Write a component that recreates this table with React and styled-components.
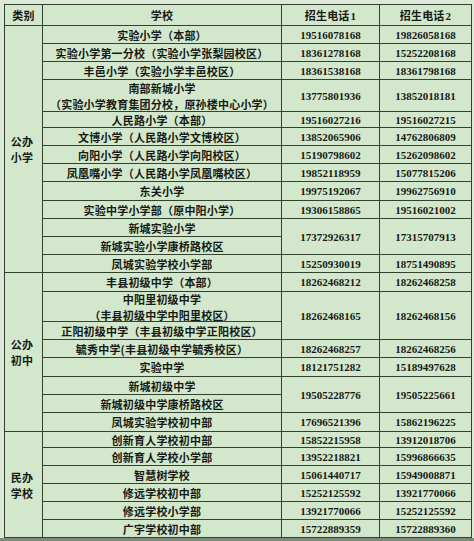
import React from "react";
import styled, { createGlobalStyle } from "styled-components";

const Global = createGlobalStyle`
  html, body { margin: 0; padding: 0; background: #dde9d8; }
  body { width: 474px; height: 541px; overflow: hidden; }
`;

const Page = styled.div`
  padding: 4px 0 0 4px;
  display: flex;
  flex-direction: column;
`;

const Grid = styled.div`
  width: 466px;
  display: grid;
  grid-template-columns: 37px 238px 97px 91px;
  grid-template-rows: ${(p) => p.$rows.map((r) => `${r}px`).join(" ")};
  gap: 1px;
  background: #33412f;
  border: 1px solid #33412f;
`;

const Cell = styled.div`
  grid-column: ${(p) => p.$col};
  grid-row: ${(p) => p.$row} / span ${(p) => p.$span || 1};
  background: #d3e7cc;
  display: flex;
  flex-direction: column;
  align-items: center;
  justify-content: center;
  text-align: center;
  color: #161a15;
  font-weight: 700;
  white-space: nowrap;
  overflow: hidden;
`;

const HanCell = styled(Cell)`
  font-family: "Noto Sans CJK SC", "Noto Sans", sans-serif;
  font-size: 11px;
  line-height: 16px;
  letter-spacing: 0.2px;
`;

const CategoryCell = styled(HanCell)`
  line-height: 16px;
  padding-right: 3px;
`;

const NumCell = styled(Cell)`
  font-family: "Liberation Serif", "Times New Roman", serif;
  font-size: 11px;
  line-height: 14px;
`;

const HeadCell = styled(HanCell)`
  font-size: 11px;
`;

const Digit = styled.span`
  font-family: "Liberation Serif", "Times New Roman", serif;
  margin-left: 1px;
`;

const Wavy = styled.span`
  text-decoration: underline wavy #d0302a;
  text-decoration-thickness: 1px;
  text-underline-offset: 2px;
`;

const Shade = styled.div`
  height: 3px;
  background: #7e8b7c;
  margin-left: -4px;
`;

const sections = [
  {
    label: ["公办", "小学"],
    rows: [
      { name: ["实验小学（本部）"], p1: "19516078168", p2: "19826058168" },
      { name: ["实验小学第一分校（实验小学张梨园校区）"], p1: "18361278168", p2: "15252208168" },
      { name: [[<Wavy key="w">丰邑</Wavy>, "小学（实验小学", <Wavy key="w2">丰邑</Wavy>, "校区）"]], p1: "18361538168", p2: "18361798168" },
      { name: ["南部新城小学", ["（实验小学教育集团分校，原", <Wavy key="w">孙楼</Wavy>, "中心小学）"]], p1: "13775801936", p2: "13852018181", h: 31 },
      { name: ["人民路小学（本部）"], p1: "19516027216", p2: "19516027215", h: 15 },
      { name: ["文博小学（人民路小学文博校区）"], p1: "13852065906", p2: "14762806809" },
      { name: ["向阳小学（人民路小学向阳校区）"], p1: "15190798602", p2: "15262098602" },
      { name: ["凤凰嘴小学（人民路小学凤凰嘴校区）"], p1: "19852118959", p2: "15077815206" },
      { name: ["东关小学"], p1: "19975192067", p2: "19962756910", h: 18 },
      { name: ["实验中学小学部（原中阳小学）"], p1: "19306158865", p2: "19516021002" },
      { name: ["新城实验小学"], p1: "17372926317", p2: "17315707913", span: 2 },
      { name: ["新城实验小学康桥路校区"], merged: true },
      { name: ["凤城实验学校小学部"], p1: "15250930019", p2: "18751490895" },
    ],
  },
  {
    label: ["公办", "初中"],
    rows: [
      { name: ["丰县初级中学（本部）"], p1: "18262468212", p2: "18262468258", h: 18 },
      { name: ["中阳里初级中学", "（丰县初级中学中阳里校区）"], p1: "18262468165", p2: "18262468156", span: 2, h: 29 },
      { name: ["正阳初级中学（丰县初级中学正阳校区）"], merged: true },
      { name: ["毓秀中学(丰县初级中学毓秀校区）"], p1: "18262468257", p2: "18262468256" },
      { name: ["实验中学"], p1: "18121751282", p2: "15189497628", h: 18 },
      { name: ["新城初级中学"], p1: "19505228776", p2: "19505225661", span: 2 },
      { name: ["新城初级中学康桥路校区"], merged: true },
      { name: ["凤城实验学校初中部"], p1: "17696521396", p2: "15862196225", h: 18 },
    ],
  },
  {
    label: ["民办", "学校"],
    rows: [
      { name: ["创新育人学校初中部"], p1: "15852215958", p2: "13912018706", h: 15 },
      { name: ["创新育人学校小学部"], p1: "13952218821", p2: "15996866635" },
      { name: ["智慧树学校"], p1: "15061440717", p2: "15949008871" },
      { name: [[<Wavy key="w">修远</Wavy>, "学校初中部"]], p1: "15252125592", p2: "13921770066" },
      { name: [[<Wavy key="w">修远</Wavy>, "学校小学部"]], p1: "13921770066", p2: "15252125592" },
      { name: [[<Wavy key="w">广宇</Wavy>, "学校初中部"]], p1: "15722889359", p2: "15722889360" },
    ],
  },
];

export default function App() {
  const heights = [20];
  const cells = [
    <HeadCell key="h0" $col={1} $row={1}>类别</HeadCell>,
    <HeadCell key="h1" $col={2} $row={1}>学校</HeadCell>,
    <HeadCell key="h2" $col={3} $row={1}>
      <span>招生电话<Digit>1</Digit></span>
    </HeadCell>,
    <HeadCell key="h3" $col={4} $row={1}>
      <span>招生电话<Digit>2</Digit></span>
    </HeadCell>,
  ];
  let row = 2;
  sections.forEach((sec, si) => {
    cells.push(
      <CategoryCell key={`c${si}`} $col={1} $row={row} $span={sec.rows.length}>
        {sec.label.map((l) => (
          <span key={l}>{l}</span>
        ))}
      </CategoryCell>
    );
    sec.rows.forEach((r, ri) => {
      heights.push(r.h || 17);
      cells.push(
        <HanCell key={`n${si}-${ri}`} $col={2} $row={row}>
          {r.name.map((line, li) => (
            <span key={li}>{line}</span>
          ))}
        </HanCell>
      );
      if (!r.merged) {
        cells.push(
          <NumCell key={`a${si}-${ri}`} $col={3} $row={row} $span={r.span || 1}>
            {r.p1}
          </NumCell>,
          <NumCell key={`b${si}-${ri}`} $col={4} $row={row} $span={r.span || 1}>
            {r.p2}
          </NumCell>
        );
      }
      row += 1;
    });
  });

  return (
    <>
      <Global />
      <Page>
        <Grid $rows={heights}>{cells}</Grid>
        <Shade />
      </Page>
    </>
  );
}
